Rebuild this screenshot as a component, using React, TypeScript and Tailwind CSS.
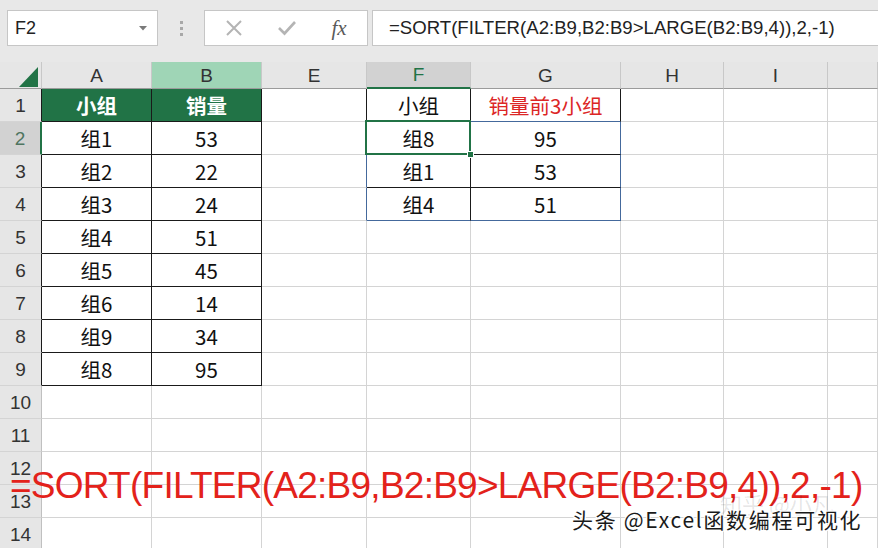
import { FC } from 'react';
import clsx from 'clsx';

type Edge = 'g' | 'k' | 'u';

const COLS = ['A', 'B', 'E', 'F', 'G', 'H', 'I', ''];
const ROWS = Array.from({ length: 14 }, (_, i) => i + 1);

const TABLE_A = ['小组', '组1', '组2', '组3', '组4', '组5', '组6', '组9', '组8'];
const TABLE_B = ['销量', '53', '22', '24', '51', '45', '14', '34', '95'];
const TOP_F = ['小组', '组8', '组1', '组4'];
const TOP_G = ['销量前3小组', '95', '53', '51'];

const RIGHT: Record<Edge, string> = {
  g: 'border-r-[#d4d4d4]',
  k: 'border-r-[#1a1a1a]',
  u: 'border-r-[#44699c]',
};

const BOTTOM: Record<Edge, string> = {
  g: 'border-b-[#d4d4d4]',
  k: 'border-b-[#1a1a1a]',
  u: 'border-b-[#44699c]',
};

const CJK = { fontFamily: "'Noto Sans CJK SC', 'Liberation Sans', sans-serif" };
const LATIN = { fontFamily: "'Liberation Sans', 'Noto Sans CJK SC', sans-serif" };

const edgesOf = (row: number, col: string): [Edge, Edge] => {
  if (col === 'A' || col === 'B') return row <= 9 ? ['k', 'k'] : ['g', 'g'];
  if (col === 'E') {
    if (row === 1) return ['k', 'g'];
    if (row <= 4) return ['u', 'g'];
  }
  if (col === 'F') {
    if (row <= 3) return ['k', 'k'];
    if (row === 4) return ['k', 'u'];
  }
  if (col === 'G') {
    if (row === 1) return ['k', 'u'];
    if (row <= 3) return ['u', 'k'];
    if (row === 4) return ['u', 'u'];
  }
  return ['g', 'g'];
};

const textOf = (row: number, col: string) => {
  if (col === 'A') return TABLE_A[row - 1];
  if (col === 'B') return TABLE_B[row - 1];
  if (col === 'F') return TOP_F[row - 1];
  if (col === 'G') return TOP_G[row - 1];
  return undefined;
};

const FormulaBar: FC = () => {
  return (
    <div className="h-[62px] bg-[#e8e8e8] flex items-start pt-[10px] pl-[7px]">
      <div className="w-[151px] h-[36px] bg-white border border-[#c6c6c6] flex items-center pl-[7px] pr-[10px]">
        <span className="flex-1 text-[18px] text-[#222]" style={LATIN}>
          F2
        </span>
        <svg width="8" height="5" viewBox="0 0 8 5">
          <path d="M0 0 L8 0 L4 4.5 Z" fill="#7a7a7a" />
        </svg>
      </div>
      <div className="w-[46px] h-[36px] flex flex-col items-center justify-center gap-[3px]">
        <span className="w-[3px] h-[3px] bg-[#a8a8a8]" />
        <span className="w-[3px] h-[3px] bg-[#a8a8a8]" />
        <span className="w-[3px] h-[3px] bg-[#a8a8a8]" />
      </div>
      <div className="w-[164px] h-[36px] bg-white border border-[#c6c6c6] flex items-center">
        <div className="w-[56px] flex justify-center pl-[2px]">
          <svg width="18" height="18" viewBox="0 0 18 18">
            <path d="M2 2 L16 16 M16 2 L2 16" stroke="#b4b4b4" strokeWidth="2" />
          </svg>
        </div>
        <div className="w-[52px] flex justify-center">
          <svg width="20" height="16" viewBox="0 0 20 16">
            <path d="M2 8 L7.5 13.5 L18 2" stroke="#b4b4b4" strokeWidth="2.6" fill="none" />
          </svg>
        </div>
        <div
          className="w-[52px] flex justify-center text-[21px] italic text-[#5a5a5a] leading-none"
          style={{ fontFamily: "'Liberation Serif', serif" }}
        >
          fx
        </div>
      </div>
      <div className="ml-[4px] flex-1 h-[36px] bg-white border border-[#c6c6c6] border-r-0 flex items-center pl-[16px]">
        <span className="text-[18.6px] text-[#222] whitespace-nowrap" style={LATIN}>
          =SORT(FILTER(A2:B9,B2:B9&gt;LARGE(B2:B9,4)),2,-1)
        </span>
      </div>
    </div>
  );
};

const ColumnHeader: FC<{ name: string }> = ({ name }) => {
  return (
    <div
      className={clsx(
        'flex items-center justify-center text-[19px] border-r border-r-[#c8c8c8] leading-none',
        name === 'B' && 'bg-[#9fd5b6] text-[#333] border-b border-b-[#9b9b9b]',
        name === 'F' && 'bg-[#d2d2d2] text-[#217346] border-b-2 border-b-[#217346]',
        name !== 'B' && name !== 'F' && 'bg-[#e6e6e6] text-[#333] border-b border-b-[#9b9b9b]'
      )}
      style={LATIN}
    >
      {name}
    </div>
  );
};

const RowHeader: FC<{ row: number }> = ({ row }) => {
  return (
    <div
      className={clsx(
        'flex items-center justify-center text-[19px] border-b border-b-[#d4d4d4] leading-none',
        row === 2 && 'bg-[#d2d2d2] text-[#4f7560] border-r-2 border-r-[#217346]',
        row !== 2 && 'bg-[#e6e6e6] text-[#333] border-r',
        row !== 2 && row <= 9 && 'border-r-[#1a1a1a]',
        row > 9 && 'border-r-[#c0c0c0]'
      )}
      style={LATIN}
    >
      {row}
    </div>
  );
};

const Cell: FC<{ row: number; col: string }> = ({ row, col }) => {
  const [r, b] = edgesOf(row, col);
  const text = textOf(row, col);
  const isHead = row === 1 && (col === 'A' || col === 'B');
  const selected = row === 2 && col === 'F';
  return (
    <div
      className={clsx(
        'relative flex items-center justify-center border-r border-b text-[20.5px] leading-none',
        RIGHT[r],
        BOTTOM[b],
        isHead ? 'bg-[#217346] text-white font-bold' : 'bg-white text-[#111]',
        row === 1 && col === 'G' && 'text-[#dc2626]'
      )}
      style={CJK}
    >
      {text}
      {selected && (
        <>
          <div className="absolute left-[-2px] top-[-2px] right-[-1px] bottom-[-1px] border-2 border-[#217346] z-10" />
          <div className="absolute right-[-4px] bottom-[-4px] w-[7px] h-[7px] bg-[#217346] border border-white z-20" />
        </>
      )}
    </div>
  );
};

const Sheet: FC = () => {
  return (
    <div className="relative h-[486px] overflow-hidden bg-white">
      <div className="grid grid-cols-[42px_110px_110px_105px_104px_150px_103px_104px_50px] grid-rows-[27px_repeat(14,33px)]">
        <div className="bg-[#e6e6e6] border-r border-r-[#c8c8c8] border-b border-b-[#9b9b9b] relative">
          <svg className="absolute left-0 top-0" width="42" height="27" viewBox="0 0 42 27">
            <path d="M19 25 L38 25 L38 5 Z" fill="#217346" />
          </svg>
        </div>
        {COLS.map((c, i) => (
          <ColumnHeader key={`h${i}`} name={c} />
        ))}
        {ROWS.map((row) => [
          <RowHeader key={`r${row}`} row={row} />,
          ...COLS.map((c, i) => <Cell key={`${row}-${i}`} row={row} col={c} />),
        ])}
      </div>

      {/* big formula caption laid over the grid */}
      <div
        className="absolute left-[10px] top-[405px] text-[37px] leading-none text-[#e3221b] whitespace-nowrap tracking-[-0.75px] z-30"
        style={LATIN}
      >
        =SORT(FILTER(A2:B9,B2:B9&gt;LARGE(B2:B9,4)),2,-1)
      </div>

      <div
        className="absolute left-[720px] top-[430px] text-[22px] leading-none text-black/10 whitespace-nowrap z-30"
        style={CJK}
      >
        知乎 @小凡
      </div>
      <div
        className="absolute left-[572px] top-[447px] text-[21px] leading-none text-[#1a1a1a] whitespace-nowrap tracking-[1.7px] z-40 [text-shadow:1px_1px_0_#fff,-1px_-1px_0_#fff,1px_-1px_0_#fff,-1px_1px_0_#fff]"
        style={CJK}
      >
        头条 @Excel函数编程可视化
      </div>
    </div>
  );
};

export default function App() {
  return (
    <div className="w-[878px] h-[548px] overflow-hidden bg-white">
      <FormulaBar />
      <Sheet />
    </div>
  );
}
